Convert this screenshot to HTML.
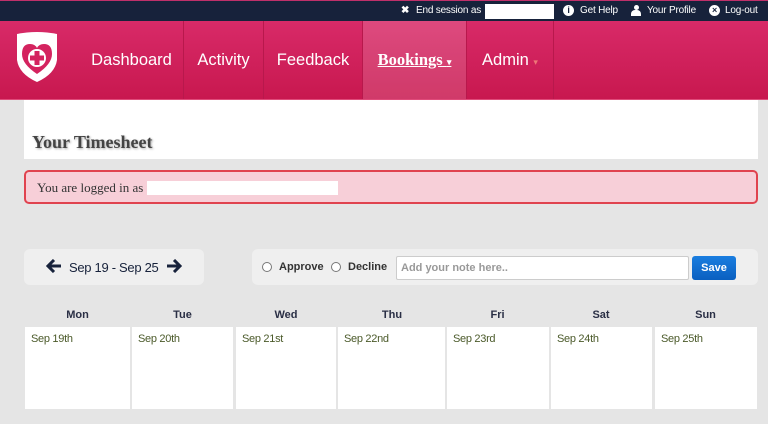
<!DOCTYPE html>
<html><head><style>
*{box-sizing:border-box;margin:0;padding:0}
body{width:768px;height:424px;background:#e5e5e5;font-family:"Liberation Sans",sans-serif;position:relative;overflow:hidden}
.top{position:absolute;left:0;top:0;width:768px;height:21px;background:#17223b;border-top:1px solid #c0306a;color:#fff;font-size:10px;letter-spacing:-0.2px}
.top span{position:absolute;top:4px}
.nav{position:absolute;left:0;top:21px;width:768px;height:79px;background:linear-gradient(#d82a68,#c8184f);border-bottom:1px solid #e04b7a}
.nav a{position:absolute;top:0;height:78px;line-height:78px;color:#fff;font-size:16.5px;text-align:center;border-right:1px solid #b8184c}
.a{position:absolute}
.cell{position:absolute;top:327px;height:82px;background:#fff;font-size:11px;color:#4b5a2a;padding:6px 6px;letter-spacing:-0.3px}
.hd{position:absolute;top:309px;font-size:11px;font-weight:bold;color:#2a2f45;text-align:center}
</style></head><body>
<div class="top">
<span style="left:401px;font-weight:bold">✖</span>
<span style="left:416px">End session as</span>
<div class="a" style="left:485px;top:3px;width:69px;height:15px;background:#fff"></div>
<span style="left:563px;top:4px;width:11px;height:11px;border-radius:50%;background:#fff;color:#17223b;font-size:9px;text-align:center;line-height:11px;font-weight:bold">i</span>
<span style="left:580px">Get Help</span>
<span style="left:631px;top:4px;width:10px;height:11px"><i style="position:absolute;left:3px;top:0;width:5px;height:5px;border-radius:50%;background:#fff"></i><i style="position:absolute;left:0;top:5px;width:10px;height:6px;border-radius:4px 4px 0 0;background:#fff"></i></span>
<span style="left:647px">Your Profile</span>
<span style="left:709px;top:4px;width:11px;height:11px;border-radius:50%;background:#fff;color:#17223b;font-size:9px;text-align:center;line-height:11px;font-weight:bold">×</span>
<span style="left:725px">Log-out</span>
</div>
<div class="nav">
<svg class="a" style="left:15px;top:11px" width="44" height="52" viewBox="0 0 44 52"><path d="M2 2 Q22 -2 42 2 L42 28 Q40 42 22 50 Q4 42 2 28 Z" fill="#fff"/><path d="M22 42 Q7 32 7 22 Q7 12 15 12 Q20 12 22 16 Q24 12 29 12 Q37 12 37 22 Q37 32 22 42 Z" fill="#d4235f"/><circle cx="22" cy="26" r="9" fill="#fff"/><rect x="19.5" y="19" width="5" height="14" fill="#d4235f"/><rect x="15" y="23.5" width="14" height="5" fill="#d4235f"/></svg>
<a style="left:80px;width:104px">Dashboard</a>
<a style="left:184px;width:80px">Activity</a>
<a style="left:264px;width:99px">Feedback</a>
<a style="left:363px;width:104px;background:rgba(255,255,255,.15);font-family:'Liberation Serif',serif;font-weight:bold;text-decoration:underline">Bookings <small style="font-size:9px;text-decoration:none">▾</small></a>
<a style="left:467px;width:87px">Admin <small style="font-size:9px;color:#e77">▾</small></a>
</div>
<div class="a" style="left:24px;top:100px;width:734px;height:59px;background:#fff"></div>
<div class="a" style="left:32px;top:132px;font-family:'Liberation Serif',serif;font-weight:bold;font-size:18px;color:#444;text-shadow:1px 1px 2px #aaa">Your Timesheet</div>
<div class="a" style="left:24px;top:170px;width:734px;height:34px;background:#f7cfd8;border:2px solid #e0434f;border-radius:5px"></div>
<div class="a" style="left:37px;top:180px;font-family:'Liberation Serif',serif;font-size:13px;color:#333">You are logged in as</div>
<div class="a" style="left:147px;top:181px;width:191px;height:14px;background:#fff"></div>
<div class="a" style="left:24px;top:249px;width:180px;height:36px;background:#efefef;border-radius:6px"></div>
<svg class="a" style="left:46px;top:259px" width="16" height="14" viewBox="0 0 16 14"><path d="M8 1 L2 7 L8 13 M2 7 H15" stroke="#17223b" stroke-width="3" fill="none"/></svg>
<div class="a" style="left:69px;top:260px;font-size:13px;color:#17223b;letter-spacing:-0.3px">Sep 19 - Sep 25</div>
<svg class="a" style="left:166px;top:259px" width="16" height="14" viewBox="0 0 16 14"><path d="M8 1 L14 7 L8 13 M14 7 H1" stroke="#17223b" stroke-width="3" fill="none"/></svg>
<div class="a" style="left:252px;top:249px;width:506px;height:36px;background:#efefef;border-radius:6px"></div>
<div class="a" style="left:262px;top:262px;width:10px;height:10px;border:1px solid #777;border-radius:50%;background:#fff"></div>
<div class="a" style="left:279px;top:261px;font-size:11px;font-weight:bold;color:#333">Approve</div>
<div class="a" style="left:331px;top:262px;width:10px;height:10px;border:1px solid #777;border-radius:50%;background:#fff"></div>
<div class="a" style="left:348px;top:261px;font-size:11px;font-weight:bold;color:#333">Decline</div>
<div class="a" style="left:396px;top:256px;width:293px;height:24px;background:#fff;border:1px solid #ccc;border-radius:2px;font-size:11px;font-weight:bold;color:#999;padding:5px 4px">Add your note here..</div>
<div class="a" style="left:692px;top:256px;width:44px;height:24px;background:linear-gradient(#1a7ee0,#0a5fc0);border-radius:3px;color:#fff;font-size:11px;font-weight:bold;text-align:center;line-height:24px">Save</div>
<div class="hd" style="left:25px;width:105px">Mon</div>
<div class="hd" style="left:132px;width:101px">Tue</div>
<div class="hd" style="left:236px;width:100px">Wed</div>
<div class="hd" style="left:338px;width:108px">Thu</div>
<div class="hd" style="left:446px;width:103px">Fri</div>
<div class="hd" style="left:550px;width:102px">Sat</div>
<div class="hd" style="left:654px;width:103px">Sun</div>
<div class="cell" style="left:25px;width:105px">Sep 19th</div>
<div class="cell" style="left:132px;width:101px">Sep 20th</div>
<div class="cell" style="left:236px;width:100px">Sep 21st</div>
<div class="cell" style="left:338px;width:107px">Sep 22nd</div>
<div class="cell" style="left:447px;width:102px">Sep 23rd</div>
<div class="cell" style="left:551px;width:101px">Sep 24th</div>
<div class="cell" style="left:655px;width:102px">Sep 25th</div>
</body></html>
